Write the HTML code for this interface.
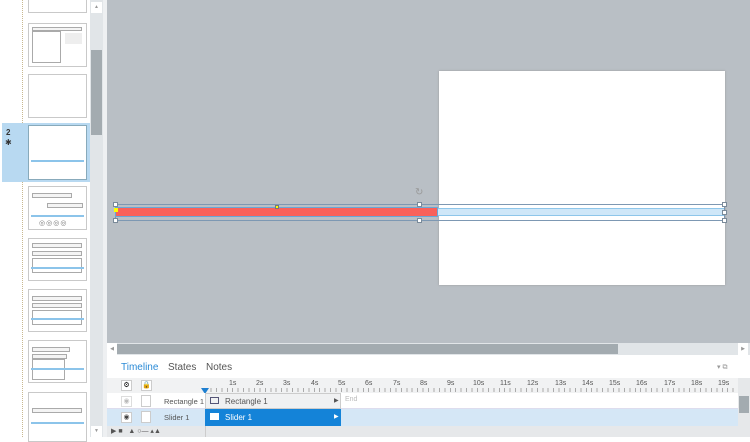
<!DOCTYPE html>
<html><head><meta charset="utf-8"><style>
*{margin:0;padding:0;box-sizing:border-box}
body{width:750px;height:437px;overflow:hidden;background:#fff;font-family:"Liberation Sans",sans-serif;position:relative}
.a{position:absolute}
.th{position:absolute;left:28px;width:59px;border:1px solid #c9c9c9;background:#fff}
.bl{position:absolute;left:2px;right:2px;height:2px;background:#8cc4ea}
.tb{position:absolute;border:1px solid #aaa;height:5px;background:#f4f4f4}
.h{position:absolute;width:5px;height:5px;border:1px solid #7a8a99;background:#fff}
</style></head><body>
<!-- left panel -->
<div class="a" style="left:22px;top:0;width:0;height:437px;border-left:1px dotted #c8b890"></div>
<div class="a" style="left:2px;top:123px;width:88px;height:59px;background:#b8d9f1"></div>
<div class="a" style="left:6px;top:128px;font-size:8px;font-weight:bold;color:#333">2</div>
<div class="a" style="left:5px;top:138px;font-size:8px;color:#333">✱</div>
<div class="th" style="top:-3px;height:16px"></div>
<div class="th" style="top:23px;height:44px"><div class="tb" style="left:3px;top:3px;width:50px;height:4px"></div><div class="a" style="left:3px;top:7px;width:29px;height:32px;border:1px solid #aaa"></div><div class="a" style="left:36px;top:9px;width:17px;height:11px;background:#eee"></div></div>
<div class="th" style="top:74px;height:44px"></div>
<div class="th" style="top:125px;height:55px;border-color:#8ab"><div class="bl" style="top:34px"></div></div>
<div class="th" style="top:186px;height:44px"><div class="tb" style="left:3px;top:6px;width:40px"></div><div class="tb" style="left:18px;top:16px;width:36px"></div><div class="bl" style="top:28px"></div><div class="a" style="left:10px;top:32px;font-size:7px;color:#777;letter-spacing:1px">◎◎◎◎</div></div>
<div class="th" style="top:238px;height:43px"><div class="tb" style="left:3px;top:4px;width:50px"></div><div class="tb" style="left:3px;top:12px;width:50px"></div><div class="a" style="left:3px;top:19px;width:50px;height:15px;border:1px solid #aaa"></div><div class="bl" style="top:28px"></div></div>
<div class="th" style="top:289px;height:43px"><div class="tb" style="left:3px;top:6px;width:50px"></div><div class="tb" style="left:3px;top:13px;width:50px"></div><div class="a" style="left:3px;top:20px;width:50px;height:15px;border:1px solid #aaa"></div><div class="bl" style="top:28px"></div></div>
<div class="th" style="top:340px;height:43px"><div class="tb" style="left:3px;top:6px;width:38px"></div><div class="tb" style="left:3px;top:13px;width:35px"></div><div class="a" style="left:3px;top:18px;width:33px;height:21px;border:1px solid #aaa"></div><div class="bl" style="top:27px"></div></div>
<div class="th" style="top:392px;height:50px"><div class="tb" style="left:3px;top:15px;width:50px"></div><div class="bl" style="top:29px"></div></div>
<!-- left scrollbar -->
<div class="a" style="left:90px;top:0;width:13px;height:437px;background:#e1e5e8"></div>
<div class="a" style="left:91px;top:2px;width:11px;height:11px;background:#fff;font-size:5px;color:#999;text-align:center;line-height:11px">▲</div>
<div class="a" style="left:91px;top:50px;width:11px;height:85px;background:#a3abb0"></div>
<div class="a" style="left:91px;top:426px;width:11px;height:11px;background:#fff;font-size:5px;color:#999;text-align:center;line-height:11px">▼</div>
<div class="a" style="left:103px;top:0;width:4px;height:437px;background:#eef0f2"></div>
<!-- canvas -->
<div class="a" style="left:107px;top:0;width:643px;height:343px;background:#b9bfc5"></div>
<div class="a" style="left:439px;top:71px;width:286px;height:214px;background:#fff;box-shadow:0 0 2px #999"></div>
<div class="a" style="left:115px;top:204px;width:610px;height:17px;border:1px solid #7d98b3"></div>
<div class="a" style="left:438px;top:208px;width:286px;height:8px;background:#cfe7f8;border-top:1px solid #8ec6ea;border-bottom:1px solid #8ec6ea"></div>
<div class="a" style="left:115px;top:207px;width:323px;height:10px;background:#f9615a;border:1px solid #6aa6d6"></div>
<div class="h" style="left:113px;top:202px"></div><div class="h" style="left:113px;top:218px"></div>
<div class="h" style="left:417px;top:202px"></div><div class="h" style="left:417px;top:218px"></div>
<div class="h" style="left:722px;top:202px"></div><div class="h" style="left:722px;top:210px"></div><div class="h" style="left:722px;top:218px"></div>
<div class="a" style="left:114px;top:208px;width:4px;height:4px;background:#ff0"></div>
<div class="a" style="left:275px;top:205px;width:4px;height:4px;background:#ff0;border:1px solid #777"></div>
<div class="a" style="left:415px;top:187px;font-size:10px;color:#999">↻</div>
<!-- h scrollbar -->
<div class="a" style="left:107px;top:343px;width:643px;height:12px;background:#e1e5e8"></div>
<div class="a" style="left:107px;top:343px;width:10px;height:12px;background:#fff;font-size:5px;color:#999;line-height:12px;text-align:center">◀</div>
<div class="a" style="left:117px;top:344px;width:501px;height:10px;background:#a3abb0"></div>
<div class="a" style="left:738px;top:343px;width:10px;height:12px;background:#fff;font-size:5px;color:#999;line-height:12px;text-align:center">▶</div>
<!-- timeline panel -->
<div class="a" style="left:107px;top:355px;width:643px;height:82px;background:#fff"></div>
<div class="a" style="left:121px;top:362px;font-size:10px;color:#2a8ad6">Timeline</div>
<div class="a" style="left:168px;top:362px;font-size:10px;color:#555">States</div>
<div class="a" style="left:206px;top:362px;font-size:10px;color:#555">Notes</div>
<div class="a" style="left:717px;top:363px;font-size:7px;color:#999">▾ ⧉</div>
<div class="a" style="left:107px;top:378px;width:631px;height:15px;background:#f1f2f3"></div>
<div class="a" style="left:121px;top:380px;width:11px;height:11px;background:#fff;border:1px solid #ccc;font-size:7px;text-align:center;line-height:9px">⚙</div>
<div class="a" style="left:141px;top:380px;width:11px;height:11px;background:#fff;border:1px solid #ccc;font-size:7px;text-align:center;line-height:9px">🔒</div>
<div class="a" style="left:205px;top:388px;width:533px;height:4px;background:repeating-linear-gradient(90deg,#aaa 0 1px,transparent 1px 5.44px)"></div>
<div class="a" style="left:201px;top:388px;width:0;height:0;border-left:4px solid transparent;border-right:4px solid transparent;border-top:6px solid #1e7fd0"></div>
<div class="a" style="left:205px;top:380px;font-size:7px;color:#555;white-space:nowrap">
<span style="position:absolute;left:24px">1s</span><span style="position:absolute;left:51px">2s</span><span style="position:absolute;left:78px">3s</span><span style="position:absolute;left:106px">4s</span><span style="position:absolute;left:133px">5s</span><span style="position:absolute;left:160px">6s</span><span style="position:absolute;left:188px">7s</span><span style="position:absolute;left:215px">8s</span><span style="position:absolute;left:242px">9s</span><span style="position:absolute;left:268px">10s</span><span style="position:absolute;left:295px">11s</span><span style="position:absolute;left:322px">12s</span><span style="position:absolute;left:350px">13s</span><span style="position:absolute;left:377px">14s</span><span style="position:absolute;left:404px">15s</span><span style="position:absolute;left:431px">16s</span><span style="position:absolute;left:459px">17s</span><span style="position:absolute;left:486px">18s</span><span style="position:absolute;left:513px">19s</span></div>
<!-- rows -->
<div class="a" style="left:107px;top:393px;width:631px;height:16px;background:#fff;border-bottom:1px solid #dde"></div>
<div class="a" style="left:121px;top:396px;width:11px;height:11px;border:1px solid #ddd;font-size:7px;color:#bbb;text-align:center;line-height:9px">◉</div>
<div class="a" style="left:141px;top:395px;width:10px;height:12px;border:1px solid #ccc"></div>
<div class="a" style="left:164px;top:397px;font-size:7.5px;color:#555">Rectangle 1</div>
<div class="a" style="left:205px;top:393px;width:136px;height:16px;background:#f0f1f2;border:1px solid #ccc"></div>
<div class="a" style="left:210px;top:397px;width:9px;height:7px;border:1px solid #557"></div>
<div class="a" style="left:225px;top:397px;font-size:8px;color:#555">Rectangle 1</div>
<div class="a" style="left:334px;top:397px;font-size:6px;color:#555">▶</div>
<div class="a" style="left:345px;top:396px;font-size:7px;color:#bbb">End</div>
<div class="a" style="left:107px;top:409px;width:631px;height:17px;background:#d5e7f6"></div>
<div class="a" style="left:121px;top:412px;width:11px;height:11px;border:1px solid #ccc;background:#fff;font-size:7px;color:#444;text-align:center;line-height:9px">◉</div>
<div class="a" style="left:141px;top:411px;width:10px;height:12px;border:1px solid #ccc;background:#fff"></div>
<div class="a" style="left:164px;top:413px;font-size:7.5px;color:#555">Slider 1</div>
<div class="a" style="left:205px;top:409px;width:136px;height:17px;background:#1483d8"></div>
<div class="a" style="left:210px;top:413px;width:9px;height:7px;background:#fff;border:1px solid #fff"></div>
<div class="a" style="left:225px;top:413px;font-size:8px;color:#fff">Slider 1</div>
<div class="a" style="left:334px;top:413px;font-size:6px;color:#fff">▶</div>
<!-- v scrollbar timeline -->
<div class="a" style="left:738px;top:378px;width:12px;height:59px;background:#e6e8ea"></div>
<div class="a" style="left:739px;top:396px;width:10px;height:17px;background:#a3abb0"></div>
<!-- bottom bar -->
<div class="a" style="left:107px;top:426px;width:631px;height:11px;background:#e6e8ea"></div>
<div class="a" style="left:205px;top:426px;width:1px;height:11px;background:#ccc"></div>
<div class="a" style="left:111px;top:427px;font-size:7px;color:#555;white-space:nowrap">▶ ■ &nbsp; ▲ ○— ▴▲</div>
</body></html>
